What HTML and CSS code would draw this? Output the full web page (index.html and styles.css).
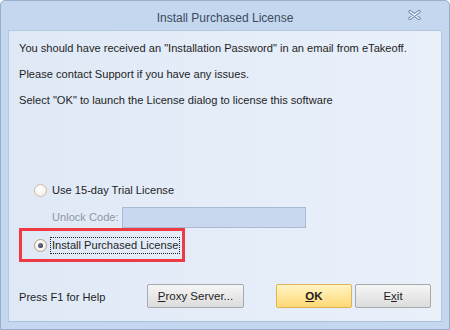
FILE: index.html
```html
<!DOCTYPE html>
<html>
<head>
    <title>Install Purchased License</title>
    <link rel="stylesheet" href="styles.css">
</head>
<body>
    <div class="window">
        <div class="titlebar">
            <span class="title">Install Purchased License</span>
            <svg class="close-icon" width="13" height="10" viewBox="0 0 13 10">
                <path d="M2 1.5 L11 8.5 M11 1.5 L2 8.5" stroke="#7489a8" stroke-width="3.4" stroke-linecap="round"/>
                <path d="M2 1.5 L11 8.5 M11 1.5 L2 8.5" stroke="#f4f8fd" stroke-width="1.4" stroke-linecap="round"/>
            </svg>
        </div>
        <div class="client">
            <div class="messages">
                <p>You should have received an "Installation Password" in an email from eTakeoff.</p>
                <p>Please contact Support if you have any issues.</p>
                <p>Select "OK" to launch the License dialog to license this software</p>
            </div>
            <div class="options">
                <label class="option">
                    <span class="radio"></span>
                    <span class="option-label">Use 15-day Trial License</span>
                </label>
                <div class="unlock-row">
                    <span class="unlock-label">Unlock Code:</span>
                    <span class="unlock-input"></span>
                </div>
                <div class="highlight">
                    <label class="option">
                        <span class="radio checked"></span>
                        <span class="option-label focused">Install Purchased License</span>
                    </label>
                </div>
            </div>
            <div class="footer">
                <span class="help">Press F1 for Help</span>
                <button class="btn proxy"><u>P</u>roxy Server...</button>
                <button class="btn primary"><u>O</u>K</button>
                <button class="btn exit">E<u>x</u>it</button>
            </div>
        </div>
    </div>
</body>
</html>
```

FILE: styles.css
```css
body {
    margin: 0;
    font-family: 'Liberation Sans', Arial, sans-serif;
    font-size: 11.1px;
    color: #1e1e1e;
}

.window {
    width: 450px;
    height: 330px;
    box-sizing: border-box;
    background: #c5d7ee;
    border: 1px solid #98aecb;
    border-radius: 5px 5px 0 0;
    display: flex;
    flex-direction: column;
}

.titlebar {
    height: 29px;
    flex: 0 0 29px;
    display: flex;
    align-items: center;
    justify-content: center;
    position: relative;
}

.title {
    font-size: 12px;
    color: #3b4a5e;
    margin-top: 4px;
}

.close-icon {
    position: absolute;
    right: 28px;
    top: 9px;
}

.client {
    flex: 1;
    margin: 0 7px 7px;
    background: linear-gradient(to right, #dfe9f6, #e9f0fa);
    border: 1px solid #b4c8e2;
    border-bottom-color: #aac0dd;
    display: flex;
    flex-direction: column;
    padding: 4px 0 0 10px;
    white-space: nowrap;
}

.messages p {
    margin: 0;
    line-height: 26px;
}

.options {
    margin-top: 67px;
}

.option {
    display: flex;
    align-items: center;
    height: 20px;
}

.radio {
    flex: 0 0 auto;
    width: 11px;
    height: 11px;
    margin-left: 15px;
    margin-right: 5px;
    border: 1px solid #d2b89a;
    border-radius: 50%;
    background: radial-gradient(circle at 40% 35%, #ffffff, #f1ece5);
    position: relative;
}

.radio.checked {
    border-color: #b99e84;
}

.radio.checked::after {
    content: "";
    position: absolute;
    left: 3px;
    top: 3px;
    width: 5px;
    height: 5px;
    border-radius: 50%;
    background: radial-gradient(circle at 40% 35%, #6c7e98, #1f2a3b);
}

.unlock-row {
    display: flex;
    align-items: center;
    margin-top: 7px;
    height: 20px;
}

.unlock-label {
    flex: 0 0 auto;
    color: #8d97a5;
    margin-left: 33px;
    width: 70px;
}

.unlock-input {
    width: 182px;
    height: 19px;
    background: #c9d8ee;
    border: 1px solid #a9bbd2;
}

.highlight {
    width: 160px;
    height: 28px;
    border: 3px solid #f03a43;
    margin-top: 1px;
    display: flex;
    align-items: center;
}

.highlight .radio {
    margin-left: 12px;
}

.option-label.focused {
    outline: 1px dotted #222;
    padding: 0 1px;
    margin-left: -1px;
    line-height: 15px;
}

.footer {
    margin-top: auto;
    margin-bottom: 13px;
    display: flex;
    align-items: center;
}

.help {
    width: 128px;
    margin-top: 2px;
}

.btn {
    height: 24px;
    font-family: 'Liberation Sans', Arial, sans-serif;
    font-size: 11.5px;
    color: #1e1e1e;
    border: 1px solid #a7a9ad;
    border-radius: 2px;
    background: linear-gradient(#f5f5f5, #dcdcdc);
    padding: 0;
}

.proxy {
    width: 97px;
}

.primary {
    width: 76px;
    margin-left: 32px;
    font-weight: bold;
    border-color: #e3b155;
    background: linear-gradient(#fff4c4, #ffd876);
}

.exit {
    width: 76px;
    margin-left: 3px;
}
```
